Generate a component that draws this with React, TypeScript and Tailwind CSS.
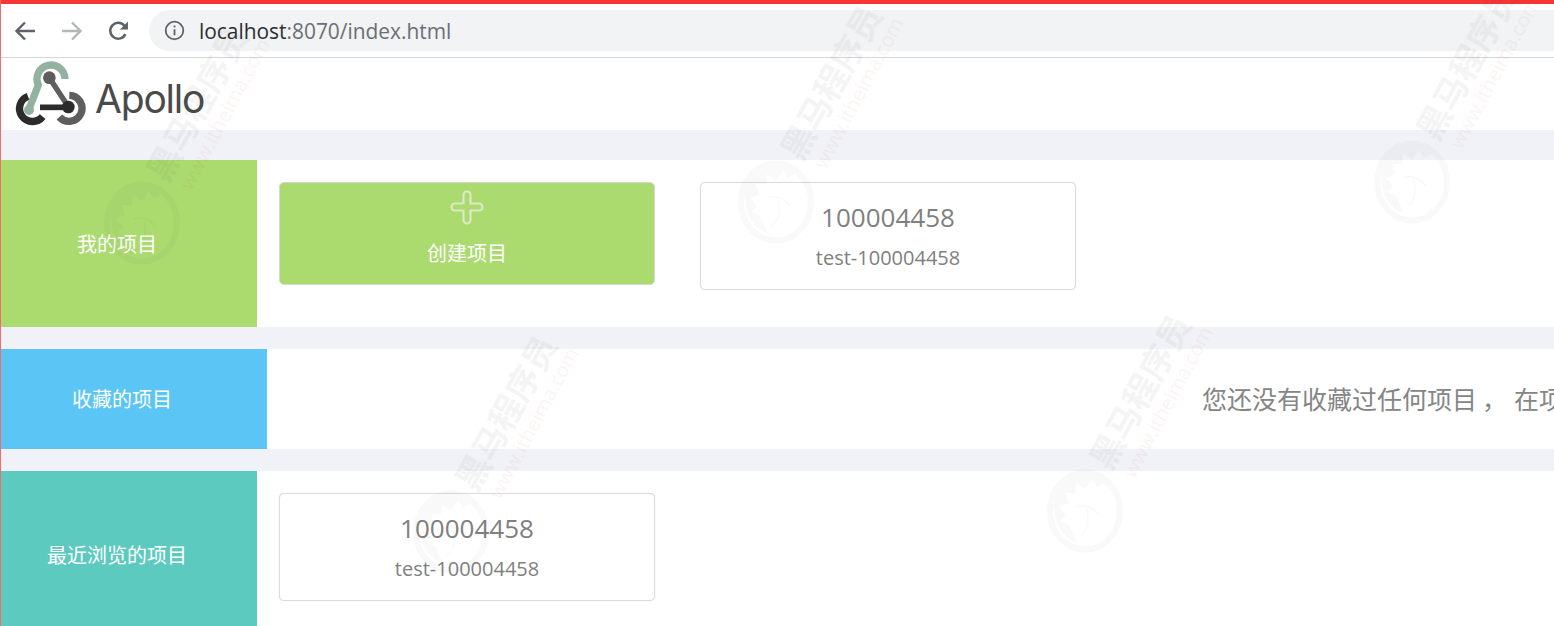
import React from "react";

const cjk = "font-['Open_Sans','Noto_Sans_CJK_SC',sans-serif]";

function Mark({ x, y }: { x: number; y: number }) {
  return (
    <div className="absolute pointer-events-none w-0 h-0" style={{ left: x, top: y }}>
      <svg className="absolute left-[-40px] top-[-42px] opacity-[0.025]" width="80" height="84" viewBox="0 0 80 84" fill="none">
        <ellipse cx="40" cy="42" rx="35" ry="38.500" stroke="#333" strokeWidth="6" />
        <path d="M40 4 C26 5 14 12 8 26 L10 46 C12 60 22 70 32 74 L24 56 L15 52 L21 46 L14 38 L23 34 L20 24 L30 24 L31 14 L40 20 L47 10 L52 18 L62 12 C56 7 48 4 40 4Z" fill="#333" />
        <path d="M32 38 C40 34 50 40 54 46 M42 40 C44 50 44 60 36 66" stroke="#333" strokeWidth="1.500" />
      </svg>
      <div className="absolute left-0 top-[-120px] ml-[54px] w-0 h-0 flex items-center justify-center">
        <div className="shrink-0 -rotate-[61deg] text-[34px] leading-[38px] font-bold text-[#444] opacity-[0.05] font-['Noto_Sans_CJK_SC',sans-serif] whitespace-nowrap">
          黑马程序员
        </div>
      </div>
      <div className="absolute left-0 top-[-109px] ml-[83px] w-0 h-0 flex items-center justify-center">
        <div className="shrink-0 -rotate-[62deg] text-[20px] leading-[24px] text-[#c04040] opacity-[0.05] font-['Open_Sans',sans-serif] whitespace-nowrap">
          www.itheima.com
        </div>
      </div>
    </div>
  );
}

function Card() {
  return (
    <div className="w-[376px] h-[108px] rounded-[5px] border border-[#dcdcdf] shadow-[0_0_1px_#d5d5d8] bg-white flex flex-col items-center text-[#808080]">
      <div className="mt-[18px] text-[26px] leading-[32px]">100004458</div>
      <div className="mt-[12px] text-[20px] leading-[26px]">test-100004458</div>
    </div>
  );
}

function Row({ color, width, h, title, titleClass, children }: { color: string; width: string; h: string; title: string; titleClass: string; children?: React.ReactNode }) {
  return (
    <section className={`flex bg-white overflow-hidden ${h}`}>
      <div className={`${color} ${width} shrink-0 flex text-white text-[20px] leading-[24px] ${titleClass}`}>{title}</div>
      {children}
    </section>
  );
}

export default function App() {
  return (
    <div className={`relative w-[1554px] h-[626px] overflow-hidden bg-[#f1f2f7] ${cjk}`}>
      <div className="h-[4px] bg-[#f63535]" />
      <header className="h-[54px] bg-white flex items-center border-b border-[#d5d5dd]">
        <div className="flex items-center pl-[14px]">
          <svg width="22" height="22" viewBox="0 0 22 22" fill="none" stroke="#5f6368" strokeWidth="2.4">
            <path d="M21 11H3M11 2.500 2.500 11l8.500 8.500" />
          </svg>
          <svg className="ml-[25px]" width="22" height="22" viewBox="0 0 22 22" fill="none" stroke="#b4b6b9" strokeWidth="2.4">
            <path d="M1 11h18M11 2.500l8.500 8.500-8.500 8.500" />
          </svg>
          <svg className="ml-[24px]" width="23" height="23" viewBox="0 0 22 22" fill="none">
            <path d="M17.600 14.500a7.600 7.600 0 1 1-.9-8" stroke="#5f6368" strokeWidth="2.4" />
            <path d="M20 2.500v7.600h-7.600z" fill="#5f6368" />
          </svg>
        </div>
        <div className="ml-[19px] flex-1 h-[41px] rounded-l-[21px] bg-[#f1f3f4] flex items-center pl-[15px]">
          <svg width="21" height="21" viewBox="0 0 21 21" fill="none" stroke="#5f6368" strokeWidth="1.800">
            <circle cx="10.500" cy="10.500" r="8.800" />
            <path d="M10.500 9.200v6M10.500 5.600v2" />
          </svg>
          <span className="ml-[14px] text-[20.900px] leading-[28px] font-['Open_Sans',sans-serif] text-[#6b6f74]">
            <span className="text-[#2b2e33]">localhost</span>:8070/index.html
          </span>
        </div>
      </header>
      <div className="h-[72px] bg-white flex items-start pl-[10px] pt-[1px]">
        <svg width="77" height="70" viewBox="30 12 231 210" fill="none">
          <path d="M84 124 A39 39 0 1 0 128 185" stroke="#2b2b2b" strokeWidth="22" />
          <path d="M120 157 H205" stroke="#2b2b2b" strokeWidth="17" />
          <path d="M208 121 A39 39 0 1 1 178 186" stroke="#5e5e5e" strokeWidth="22" />
          <path d="M148 68 L205 155" stroke="#5e5e5e" strokeWidth="16" />
          <circle cx="148" cy="68" r="19" fill="#5e5e5e" />
          <circle cx="205" cy="156" r="19" fill="#2b2b2b" />
          <path d="M195 72 A42 42 0 1 0 115 90 L86 165" stroke="#92b19e" strokeWidth="22" />
          <circle cx="87" cy="165" r="15" fill="#92b19e" />
        </svg>
        <span className="ml-[8px] mt-[18px] text-[39px] leading-[44px] tracking-[-1.200px] text-[#4a4a4a] font-['Inter',sans-serif]">Apollo</span>
      </div>

      <div className="h-[30px]" />
      <Row color="bg-[#abda6f]" width="w-[257px]" h="h-[167px]" title="我的项目" titleClass="items-center pl-[77px] pt-[3px]">
        <div className="flex items-start pt-[22px] pl-[22px] gap-[45px]">
          <div className="w-[376px] h-[103px] rounded-[5px] border border-[#d5d8cf] bg-[#abda6f] flex flex-col items-center text-white">
            <svg className="mt-[7px]" width="36" height="36" viewBox="0 0 36 36" fill="none" stroke="#dce8c8" strokeWidth="2.200">
              <path d="M14.500 5a3.500 3.500 0 0 1 7 0v8.500H30a3.500 3.500 0 0 1 0 7h-8.500V30a3.500 3.500 0 0 1-7 0v-9.500H6a3.500 3.500 0 0 1 0-7h8.500z" />
            </svg>
            <div className="mt-[16px] text-[20px] leading-[24px]">创建项目</div>
          </div>
          <Card />
        </div>
      </Row>
      <div className="h-[22px]" />
      <Row color="bg-[#5bc6f5]" width="w-[267px]" h="h-[100px]" title="收藏的项目" titleClass="items-center pl-[72px] pt-[1px]">
        <div className="pl-[935px] pt-[33px] text-[25px] leading-[34px] text-[#858585] whitespace-nowrap">
          您还没有收藏过任何项目<span className="ml-[5px] mr-[7px]">，</span>在项目主页可以收藏项目
        </div>
      </Row>
      <div className="h-[22px]" />
      <Row color="bg-[#5dcabf]" width="w-[257px]" h="h-[155px]" title="最近浏览的项目" titleClass="items-start pl-[47px] pt-[73px]">
        <div className="pt-[22px] pl-[22px]">
          <Card />
        </div>
      </Row>

      <div className="absolute left-0 top-0 bottom-0 w-[1px] bg-[#f56a6a]" />
      <Mark x={142} y={223} />
      <Mark x={776} y={202} />
      <Mark x={1412} y={182} />
      <Mark x={451} y={532} />
      <Mark x={1085} y={511} />
    </div>
  );
}
